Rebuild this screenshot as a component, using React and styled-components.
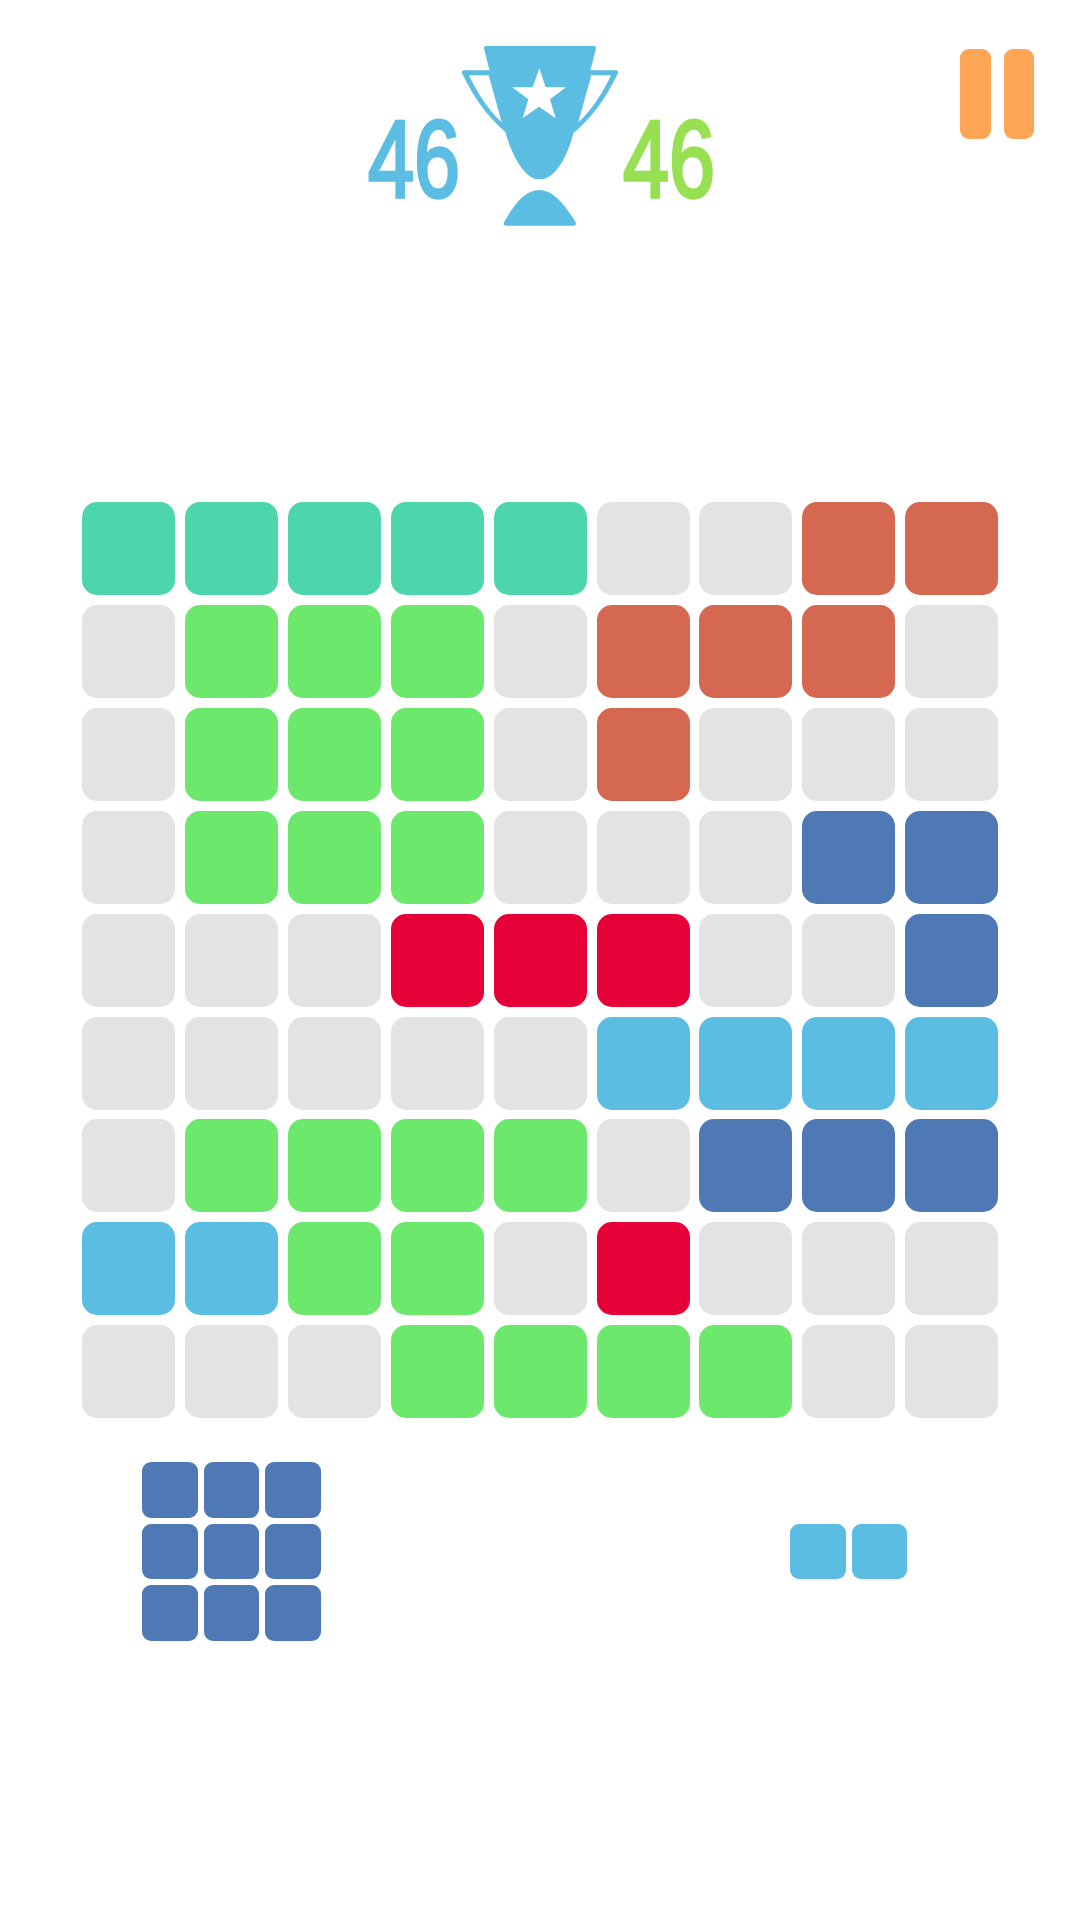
import React from "react";
import styled, { createGlobalStyle } from "styled-components";

const colors = {
  _: "#e3e3e3",
  t: "#4dd6ab",
  g: "#6ce96c",
  c: "#d56850",
  b: "#4f79b5",
  r: "#e50038",
  s: "#5cbde3",
};

const board = [
  "ttttt__cc",
  "_ggg_ccc_",
  "_ggg_c___",
  "_ggg___bb",
  "___rrr__b",
  "_____ssss",
  "_gggg_bbb",
  "ssgg_r___",
  "___gggg__",
];

const GlobalStyle = createGlobalStyle`
  html, body {
    margin: 0;
    padding: 0;
    background: #fff;
    font-family: "Liberation Sans", Arial, sans-serif;
  }
`;

const Page = styled.div`
  width: 1080px;
  height: 1920px;
  overflow: hidden;
  background: #fff;
`;

const Header = styled.header`
  height: 456.2px;
  padding-top: 46px;
  display: grid;
  grid-template-columns: 1fr 156px 1fr;
  align-items: start;
`;

const LeftSide = styled.div`
  display: flex;
  justify-content: flex-end;
  padding-right: 4px;
`;

const RightSide = styled.div`
  display: flex;
  justify-content: space-between;
  padding: 0 46px 0 5px;
`;

const Score = styled.div`
  width: 90px;
  margin-top: 73.5px;
  font-size: 109px;
  font-weight: 400;
  line-height: 79px;
  white-space: nowrap;
  color: ${(p) => p.$color};
  -webkit-text-stroke: 3.5px ${(p) => p.$color};
  transform: scaleX(0.76);
  transform-origin: left top;
`;

const PauseButton = styled.div`
  margin-top: 3px;
  display: flex;
  gap: 13px;
`;

const PauseBar = styled.div`
  width: 30.5px;
  height: 90px;
  border-radius: 9px;
  background: #ffa556;
`;

const Board = styled.div`
  margin-left: 82.2px;
  display: grid;
  grid-template-columns: repeat(9, 93px);
  grid-auto-rows: 93px;
  gap: 9.875px;
`;

const Cell = styled.div`
  border-radius: 15px;
  background: ${(p) => p.$color};
`;

const Tray = styled.div`
  margin-top: 43.9px;
  padding: 0 173px 0 142px;
  display: flex;
  justify-content: space-between;
  align-items: center;
`;

const Piece = styled.div`
  display: grid;
  grid-template-columns: repeat(${(p) => p.$cols}, 55.5px);
  grid-auto-rows: 55.5px;
  gap: 6px;
`;

const PieceCell = styled.div`
  border-radius: 9px;
  background: ${(p) => p.$color};
`;

const Trophy = () => (
  <svg width="156" height="180" viewBox="366 78 468 540">
    <g fill="#5cbde3">
      <path d="M372 151 L450 151 L500 340 C440 290 400 230 366 160 Q364 151 372 151 Z" />
      <path d="M828 151 L750 151 L700 340 C760 290 800 230 834 160 Q836 151 828 151 Z" />
    </g>
    <g fill="#fff">
      <path d="M387 166 L446 166 L485 307 C440 265 410 215 387 166 Z" />
      <path d="M813 166 L754 166 L715 307 C760 265 790 215 813 166 Z" />
    </g>
    <path
      fill="#5cbde3"
      d="M438 78 L762 78 Q769 78 768 85 L712 310 L700 340 C682 412 644 478 602 478 L598 478 C556 478 518 412 497 340 L487 310 L432 85 Q431 78 438 78 Z"
    />
    <path
      fill="#fff"
      d="M598 145 L617 202 L678 202 L630 238 L647 295 L597 260 L548 295 L565 238 L517 202 L578 202 Z"
    />
    <path
      fill="#5cbde3"
      d="M492 607 C520 555 555 510 598 510 C640 510 675 555 707 607 Q710 617 700 617 L500 617 Q488 617 492 607 Z"
    />
  </svg>
);

const App = () => (
  <Page>
    <GlobalStyle />
    <Header>
      <LeftSide>
        <Score $color="#5cbde3">46</Score>
      </LeftSide>
      <Trophy />
      <RightSide>
        <Score $color="#97e052">46</Score>
        <PauseButton>
          <PauseBar />
          <PauseBar />
        </PauseButton>
      </RightSide>
    </Header>
    <Board>
      {board.map((row, y) =>
        row.split("").map((c, x) => <Cell key={`${y}-${x}`} $color={colors[c]} />)
      )}
    </Board>
    <Tray>
      <Piece $cols={3}>
        {Array.from({ length: 9 }, (_, i) => (
          <PieceCell key={i} $color={colors.b} />
        ))}
      </Piece>
      <Piece $cols={2}>
        <PieceCell $color={colors.s} />
        <PieceCell $color={colors.s} />
      </Piece>
    </Tray>
  </Page>
);

export default App;
